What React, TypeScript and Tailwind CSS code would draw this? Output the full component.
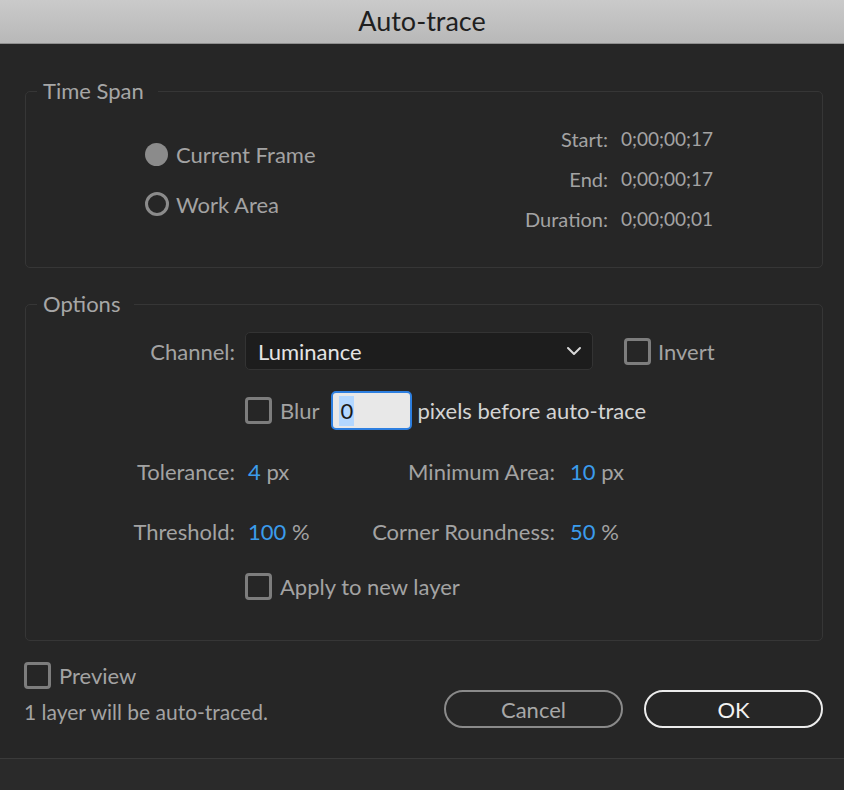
import React from 'react';

const font = { fontFamily: 'Lato, "Open Sans", sans-serif' };

function Checkbox() {
  return <span className="inline-block w-[27px] h-[27px] rounded-[4px] border-[3px] border-[#7d7d7d] shrink-0" />;
}

function Radio({ checked }: { checked?: boolean }) {
  return checked ? (
    <span className="inline-block w-[23px] h-[23px] rounded-full bg-[#8b8b8b] shrink-0" />
  ) : (
    <span className="inline-block w-[24px] h-[24px] rounded-full border-[3px] border-[#8b8b8b] shrink-0" />
  );
}

function Group({ title, children }: { title: string; children: React.ReactNode }) {
  return (
    <fieldset className="ml-[25px] mr-[21px] border border-[#363636] rounded-[5px] p-0 m-0">
      <legend className="ml-[11px] pl-[6px] pr-[14px] text-[22px] leading-[28px] text-[#a6a6a6]">{title}</legend>
      {children}
    </fieldset>
  );
}

export default function App() {
  return (
    <div className="w-[844px] h-[790px] bg-[#2a2a2a] flex flex-col" style={font}>
      <div className="h-[759px] bg-[#262626] border-b border-[#3a3a3a] flex flex-col">
        {/* Title bar */}
        <div className="h-[44px] bg-gradient-to-b from-[#cacaca] to-[#b8b8b8] border-b border-[#8f8f8f] flex items-center justify-center">
          <span className="text-[27px] text-[#1f1f1f]">Auto-trace</span>
        </div>

        <div className="h-[33px]" />

        {/* Time Span */}
        <Group title="Time Span">
          <div className="flex pt-[14px] pb-[28px]">
            <div className="w-[462px] pl-[119px] pt-[20px] flex flex-col gap-[20px] text-[22px] text-[#a3a3a3]">
              <div className="h-[30px] flex items-center gap-[8px]">
                <Radio checked />
                <span>Current Frame</span>
              </div>
              <div className="h-[30px] flex items-center gap-[7px]">
                <Radio />
                <span>Work Area</span>
              </div>
            </div>
            <div className="grid grid-cols-[120px_auto] gap-x-[13px] text-[#a3a3a3] leading-[40px]">
              <span className="text-right text-[20px]">Start:</span>
              <span className="text-[19px]">0;00;00;17</span>
              <span className="text-right text-[20px]">End:</span>
              <span className="text-[19px]">0;00;00;17</span>
              <span className="text-right text-[20px]">Duration:</span>
              <span className="text-[19px]">0;00;00;01</span>
            </div>
          </div>
        </Group>

        <div className="h-[22px]" />

        {/* Options */}
        <Group title="Options">
          <div className="pt-[14px] pb-[39px] flex flex-col text-[22px] text-[#a3a3a3]">
            <div className="flex items-center">
              <span className="w-[209px] text-right">Channel:</span>
              <div className="ml-[10px] w-[348px] h-[38px] bg-[#1d1d1d] border border-[#333] rounded-[5px] flex items-center justify-between pl-[12px] pr-[10px]">
                <span className="text-[#e4e4e4]">Luminance</span>
                <svg width="16" height="10" viewBox="0 0 16 10" fill="none" stroke="#d8d8d8" strokeWidth="2" strokeLinecap="round" strokeLinejoin="round">
                  <path d="M2 2l6 6 6-6" />
                </svg>
              </div>
              <div className="ml-[31px] flex items-center gap-[7px]">
                <Checkbox />
                <span>Invert</span>
              </div>
            </div>

            <div className="mt-[21px] flex items-center pl-[219px]">
              <Checkbox />
              <span className="ml-[8px]">Blur</span>
              <div className="ml-[12px] w-[81px] h-[39px] bg-[#e8e8e8] border-2 border-[#2d7fe0] rounded-[5px] flex items-center pl-[6px]">
                <span className="bg-[#b3d7ff] text-[#1a1a1a] h-[30px] leading-[30px] px-[1px]">0</span>
              </div>
              <span className="ml-[5px] text-[#d4d4d4]">pixels before auto-trace</span>
            </div>

            <div className="mt-[26px] h-[30px] flex items-center">
              <span className="w-[209px] text-right">Tolerance:</span>
              <span className="ml-[13px] w-[94px]"><span className="text-[#3b9cec]">4</span> px</span>
              <span className="w-[213px] text-right">Minimum Area:</span>
              <span className="ml-[15px]"><span className="text-[#3b9cec]">10</span> px</span>
            </div>

            <div className="mt-[30px] h-[30px] flex items-center">
              <span className="w-[209px] text-right">Threshold:</span>
              <span className="ml-[13px] w-[94px]"><span className="text-[#3b9cec]">100</span> %</span>
              <span className="w-[213px] text-right">Corner Roundness:</span>
              <span className="ml-[15px]"><span className="text-[#3b9cec]">50</span> %</span>
            </div>

            <div className="mt-[25px] h-[30px] flex items-center pl-[219px] gap-[8px]">
              <Checkbox />
              <span>Apply to new layer</span>
            </div>
          </div>
        </Group>

        {/* Footer */}
        <div className="mt-[21px] ml-[24px] mr-[21px] flex items-start justify-between">
          <div className="flex flex-col text-[#a3a3a3]">
            <div className="h-[27px] flex items-center gap-[8px] text-[22px]">
              <Checkbox />
              <span>Preview</span>
            </div>
            <span className="mt-[7px] text-[21px]">1 layer will be auto-traced.</span>
          </div>
          <div className="mt-[28px] flex gap-[21px]">
            <button className="w-[179px] h-[38px] rounded-full border-2 border-[#8a8a8a] text-[22px] text-[#a8a8a8]">Cancel</button>
            <button className="w-[179px] h-[38px] rounded-full border-2 border-[#ececec] text-[22px] text-[#f2f2f2]">OK</button>
          </div>
        </div>
      </div>
    </div>
  );
}
